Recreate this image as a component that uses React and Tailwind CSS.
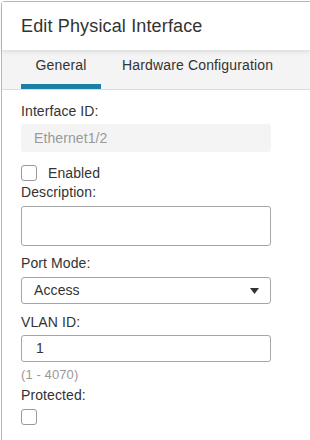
export default function App() {
  return (
    <div className="w-[310px] h-[440px] bg-white overflow-hidden pl-px pt-px" style={{ fontFamily: '"Liberation Sans", Arial, sans-serif' }}>
      <div className="h-full border-l border-t border-[#b8b8b8] rounded-tl-[4px] bg-white flex flex-col">
        {/* Header */}
        <div className="relative z-10 h-[48px] bg-white pl-[19px] flex items-center shadow-[0_2px_4px_rgba(0,0,0,0.10)]">
          <h1 className="text-[18px] text-[#333] leading-none tracking-[0.15px]">Edit Physical Interface</h1>
        </div>

        {/* Tabs */}
        <div className="h-[40px] bg-[#f4f4f4] border-b border-[#dcdcdc] flex items-end pl-[19px] gap-[21px] tracking-[0.15px]">
          <div className="w-[80px] h-full flex flex-col justify-end">
            <div className="text-[14px] text-[#333] text-center leading-[20px] pb-[9px]">General</div>
            <div className="h-[5px] bg-[#1b7fa6]" />
          </div>
          <div className="h-full flex flex-col justify-end">
            <div className="text-[14px] text-[#333] leading-[20px] pb-[14px]">Hardware Configuration</div>
          </div>
        </div>

        {/* Form */}
        <div className="pl-[19px] w-[269px] text-[14px] text-[#333] tracking-[0.1px]">
          <div className="mt-[11px] leading-[20px]">Interface ID:</div>
          <div className="mt-[3px] h-[28px] bg-[#f4f4f4] rounded-[3px] flex items-center pl-[13px] text-[#999]">
            Ethernet1/2
          </div>

          <div className="mt-[13px] flex items-center h-[16px]">
            <div className="w-[16px] h-[16px] border border-[#9a9a9a] rounded-[3px] bg-white" />
            <span className="ml-[11px] leading-[20px]">Enabled</span>
          </div>

          <div className="mt-[1px] leading-[20px]">Description:</div>
          <div className="mt-[4px] h-[40px] border border-[#a6a6a6] rounded-[3px] bg-white" />

          <div className="mt-[7px] leading-[20px]">Port Mode:</div>
          <div className="mt-[4px] h-[27px] border border-[#a6a6a6] rounded-[3px] bg-white flex items-center justify-between pl-[12px] pr-[11px]">
            <span>Access</span>
            <svg width="9" height="6" viewBox="0 0 9 6">
              <path d="M0 0 L9 0 L4.5 6 Z" fill="#333" />
            </svg>
          </div>

          <div className="mt-[8px] leading-[20px]">VLAN ID:</div>
          <div className="mt-[3px] h-[27px] border border-[#a6a6a6] rounded-[3px] bg-white flex items-center pl-[14px]">
            1
          </div>

          <div className="mt-[5px] text-[13px] leading-[16px] text-[#999]">(1 - 4070)</div>
          <div className="mt-[2px] leading-[20px]">Protected:</div>
          <div className="mt-[4px] w-[16px] h-[16px] border border-[#9a9a9a] rounded-[3px] bg-white" />
        </div>
      </div>
    </div>
  );
}
